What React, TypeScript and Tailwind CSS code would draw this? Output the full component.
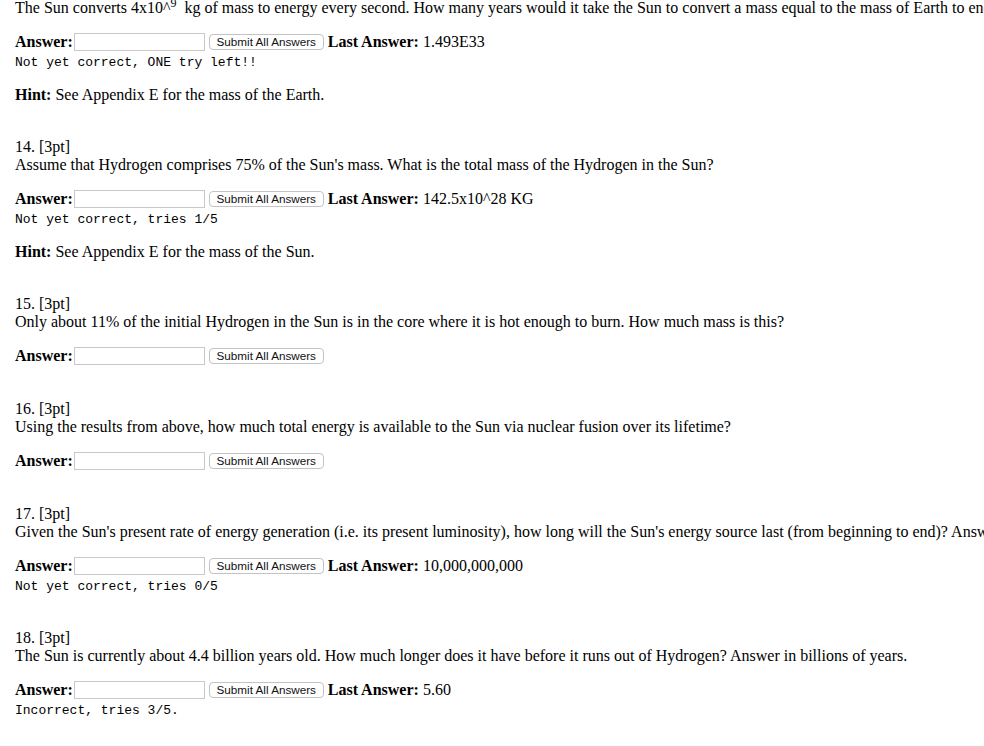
import React from "react";

interface Question {
  num?: string;
  text: React.ReactNode;
  last?: string;
  status?: string;
  hint?: string;
}

const questions: Question[] = [
  {
    text: (
      <>
        The Sun converts 4x10^<sup>9</sup>&nbsp; kg of mass to energy every second. How many years would it take the Sun to
        convert a mass equal to the mass of Earth to energy?
      </>
    ),
    last: "1.493E33",
    status: "Not yet correct, ONE try left!!",
    hint: "See Appendix E for the mass of the Earth.",
  },
  {
    num: "14. [3pt]",
    text: "Assume that Hydrogen comprises 75% of the Sun's mass. What is the total mass of the Hydrogen in the Sun?",
    last: "142.5x10^28 KG",
    status: "Not yet correct, tries 1/5",
    hint: "See Appendix E for the mass of the Sun.",
  },
  {
    num: "15. [3pt]",
    text: "Only about 11% of the initial Hydrogen in the Sun is in the core where it is hot enough to burn. How much mass is this?",
  },
  {
    num: "16. [3pt]",
    text: "Using the results from above, how much total energy is available to the Sun via nuclear fusion over its lifetime?",
  },
  {
    num: "17. [3pt]",
    text: "Given the Sun's present rate of energy generation (i.e. its present luminosity), how long will the Sun's energy source last (from beginning to end)? Answer in years.",
    last: "10,000,000,000",
    status: "Not yet correct, tries 0/5",
  },
  {
    num: "18. [3pt]",
    text: "The Sun is currently about 4.4 billion years old. How much longer does it have before it runs out of Hydrogen? Answer in billions of years.",
    last: "5.60",
    status: "Incorrect, tries 3/5.",
  },
];

function AnswerRow({ last }: { last?: string }) {
  return (
    <div className="mt-[15px] flex h-[20px] items-center">
      <b>Answer:</b>
      <input
        type="text"
        className="ml-[1px] h-[18px] w-[131px] border border-[#c9c9c9] bg-white outline-none"
      />
      <button className="ml-[4px] h-[16px] w-[115px] rounded-[4px] border border-[#c3c3c3] bg-white font-['Liberation_Sans',Arial,sans-serif] text-[11.7px] leading-[14px] text-[#111]">
        Submit All Answers
      </button>
      {last && (
        <span className="ml-[4px]">
          <b>Last Answer:</b> {last}
        </span>
      )}
    </div>
  );
}

function Block({ q, first }: { q: Question; first: boolean }) {
  return (
    <div className={first ? "" : "mt-[34px]"}>
      {q.num && <div className="whitespace-nowrap">{q.num}</div>}
      <div className="whitespace-nowrap">{q.text}</div>
      <AnswerRow last={q.last} />
      {q.status && (
        <div className="mt-[3px] whitespace-nowrap font-['Liberation_Mono','Courier_New',monospace] text-[13px] leading-[16px]">
          {q.status}
        </div>
      )}
      {q.hint && (
        <div className="mt-[15px] whitespace-nowrap">
          <b>Hint:</b> {q.hint}
        </div>
      )}
    </div>
  );
}

export default function App() {
  return (
    <div className="h-[746px] w-full overflow-hidden bg-white font-['Liberation_Serif','Times_New_Roman',serif] text-[16px] leading-[18px] text-black">
      <div className="-mt-[1px] pl-[15px]">
        {questions.map((q, i) => (
          <Block key={i} q={q} first={i === 0} />
        ))}
      </div>
    </div>
  );
}
